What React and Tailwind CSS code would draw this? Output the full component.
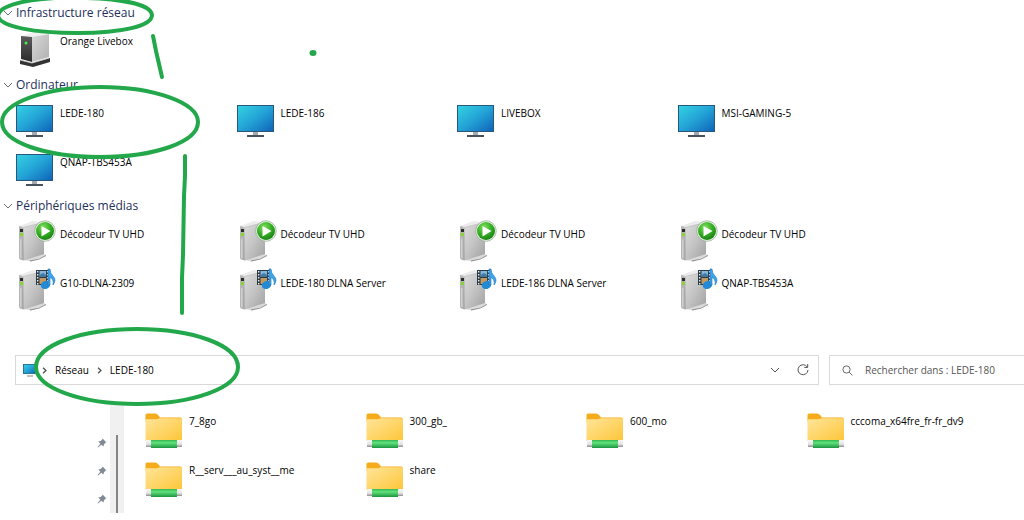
import { useState } from "react";

const sections = [
  {
    title: "Infrastructure réseau",
    items: [{ name: "Orange Livebox", icon: "router" }],
  },
  {
    title: "Ordinateur",
    items: [
      { name: "LEDE-180", icon: "monitor" },
      { name: "LEDE-186", icon: "monitor" },
      { name: "LIVEBOX", icon: "monitor" },
      { name: "MSI-GAMING-5", icon: "monitor" },
      { name: "QNAP-TBS453A", icon: "monitor" },
    ],
  },
  {
    title: "Périphériques médias",
    items: [
      { name: "Décodeur TV UHD", icon: "player" },
      { name: "Décodeur TV UHD", icon: "player" },
      { name: "Décodeur TV UHD", icon: "player" },
      { name: "Décodeur TV UHD", icon: "player" },
      { name: "G10-DLNA-2309", icon: "media" },
      { name: "LEDE-180 DLNA Server", icon: "media" },
      { name: "LEDE-186 DLNA Server", icon: "media" },
      { name: "QNAP-TBS453A", icon: "media" },
    ],
  },
];

const shares = [
  "7_8go",
  "300_gb_",
  "600_mo",
  "cccoma_x64fre_fr-fr_dv9",
  "R__serv___au_syst__me",
  "share",
];

// Gradients shared by all the icons
const Gradients = () => (
  <svg className="absolute size-0" aria-hidden="true">
    <defs>
      <linearGradient id="screen" x1="0" y1="0" x2="1" y2="1">
        <stop offset="0" stopColor="#35d3e2" />
        <stop offset="0.5" stopColor="#23a3d6" />
        <stop offset="1" stopColor="#0f62b8" />
      </linearGradient>
      <linearGradient id="side" x1="0" y1="0" x2="1" y2="1">
        <stop offset="0" stopColor="#d8d8d8" />
        <stop offset="1" stopColor="#b0b0b0" />
      </linearGradient>
      <linearGradient id="front" x1="0" y1="0" x2="0" y2="1">
        <stop offset="0" stopColor="#5b5b5b" />
        <stop offset="1" stopColor="#2c2c2c" />
      </linearGradient>
      <linearGradient id="metal" x1="0" y1="0" x2="1" y2="1">
        <stop offset="0" stopColor="#dedede" />
        <stop offset="0.5" stopColor="#c4c4c4" />
        <stop offset="1" stopColor="#a0a0a0" />
      </linearGradient>
      <radialGradient id="play" cx="0.4" cy="0.3" r="0.75">
        <stop offset="0" stopColor="#7fe05c" />
        <stop offset="0.55" stopColor="#35ad24" />
        <stop offset="1" stopColor="#157c12" />
      </radialGradient>
      <linearGradient id="folder" x1="0" y1="0" x2="1" y2="1">
        <stop offset="0" stopColor="#ffe59a" />
        <stop offset="1" stopColor="#fdc638" />
      </linearGradient>
      <linearGradient id="pipe" x1="0" y1="0" x2="0" y2="1">
        <stop offset="0" stopColor="#35b552" />
        <stop offset="0.35" stopColor="#5fe27b" />
        <stop offset="1" stopColor="#1d9440" />
      </linearGradient>
      <linearGradient id="cable" x1="0" y1="0" x2="0" y2="1">
        <stop offset="0" stopColor="#f7f7f7" />
        <stop offset="0.6" stopColor="#e4e4e4" />
        <stop offset="1" stopColor="#8e8e8e" />
      </linearGradient>
    </defs>
  </svg>
);

const RouterIcon = () => (
  <svg viewBox="0 0 40 48" className="h-12 w-10">
    <path d="M4 35 L16 38 L34 33 V37 L17 42 L4 39Z" fill="#333" />
    <path d="M5 11 L14 8 H33 L16 13Z" fill="#f0f0f0" />
    <path d="M5 11 L16 12 V37 L5 34Z" fill="url(#front)" />
    <path d="M16 12 L33 9 V32 L16 37Z" fill="url(#side)" />
    <path d="M4 35 L16 38 L33 33" fill="none" stroke="#d0d0d0" strokeWidth="0.8" />
    <circle cx="10" cy="18" r="1.5" fill="#3df04c" />
  </svg>
);

const MonitorIcon = () => (
  <svg viewBox="0 0 40 48" className="h-12 w-10">
    <path d="M16 34 H21 V38 H16Z" fill="#a4abb2" />
    <path d="M10 38 H27 V40 H10Z" fill="#47525d" />
    <rect x="0.5" y="8.5" width="36" height="26" fill="url(#screen)" stroke="#27577a" />
  </svg>
);

// Silver drive standing behind the media badges
const Drive = () => (
  <>
    <path d="M8 42 L27 35 L30 37.5 L15 43.5Z" fill="#dadada" />
    <path d="M14 43 Q24 42 30 37.5" fill="none" stroke="#777" strokeWidth="0.8" />
    <path d="M6.5 9 L23 4 Q28 3 28 8 V36 L8 42.5 L6.5 42Z" fill="url(#metal)" />
    <path d="M3 9 Q3 7.5 6.5 8.5 L7.5 42.5 L4 41.5 Q3 41 3 39.5Z" fill="#b5b5b5" />
    <path d="M3 8 L17 3 L27 4.5 L7 9.5Z" fill="#ececec" />
    <path d="M3 8 L7 9.5 L27 4.5" fill="none" stroke="#b0b0b0" strokeWidth="0.5" />
    <path d="M7 10 V42" stroke="#8d8d8d" strokeWidth="0.6" />
    <path d="M4 11 H7 V14 H4Z" fill="#2a2a2a" />
    <path d="M4 15 H7 V18 H4Z" fill="#87d52f" />
    <path d="M4.8 21 V40" stroke="#dcdcdc" />
  </>
);

const PlayerIcon = () => (
  <svg viewBox="0 0 40 48" className="h-12 w-10">
    <Drive />
    <circle cx="29" cy="13" r="10.3" fill="#e8f2e5" stroke="#7f9c7a" strokeWidth="0.6" />
    <circle cx="29" cy="13" r="9" fill="url(#play)" />
    <path d="M25.5 8 L34.5 13 L25.5 18.5Z" fill="#fff" />
  </svg>
);

const MediaIcon = () => (
  <svg viewBox="0 0 40 48" className="h-12 w-10">
    <Drive />
    <rect x="20" y="3" width="13" height="15" fill="#2d3943" />
    <path d="M23.5 4 H30 V10 H23.5Z" fill="#80b7df" />
    <path d="M23.5 11 H30 V17 H23.5Z" fill="#c39962" />
    <path d="M23.5 8 L27 6 L30 8 V10 H23.5Z" fill="#4479a2" />
    <path d="M21.7 4 V18 M31.6 4 V18" stroke="#e8eef3" strokeWidth="1.4" strokeDasharray="1.6 1.4" />
    <ellipse cx="29.5" cy="18" rx="4.8" ry="4" fill="#238bd5" transform="rotate(-20 29.5 18)" />
    <path
      d="M32 18 V2 H34 Q34 6 37 9 Q41 13 37 18 Q38 12 34 10.5 V18Z"
      fill="#3ca6ec"
      stroke="#1c70b5"
      strokeWidth="0.6"
    />
  </svg>
);

const FolderIcon = () => (
  <svg viewBox="0 0 40 48" className="h-12 w-10">
    <path d="M0.5 10 Q0.5 8.5 2 8.5 H10 Q12 8.5 13.5 10.5 L15 12.5 H35 Q36 12.5 37 13.5 V17 H0.5Z" fill="#f4ab1c" />
    <path d="M0.5 15 Q0.5 14.3 1.5 14.3 H11 Q13 14.3 14.5 13.3 H37 V36 H0.5Z" fill="url(#folder)" />
    <rect x="1" y="35" width="36" height="7" fill="url(#cable)" />
    <rect x="6" y="35" width="26" height="8" fill="url(#pipe)" />
  </svg>
);

const PinIcon = () => (
  <svg viewBox="0 0 10 10" className="size-[10px]">
    <path
      d="M5.6 0.6 L9.4 4.4 L8.4 4.8 L6.9 6.4 L6.5 8.6 L4.3 6.7 L1 9.4 L0.6 9 L3.3 5.7 L1.4 3.5 L3.6 3.1 L5.2 1.6Z"
      fill="#818b95"
    />
  </svg>
);

const Chevron = ({ className }) => (
  <svg viewBox="0 0 10 10" className={className} fill="none" stroke="currentColor">
    <path d="M1 3 L5 7 L9 3" />
  </svg>
);

const icons = {
  router: RouterIcon,
  monitor: MonitorIcon,
  player: PlayerIcon,
  media: MediaIcon,
  folder: FolderIcon,
};

const Tile = ({ name, icon }) => {
  const Icon = icons[icon];
  return (
    <li className="flex h-12 gap-1">
      <Icon />
      <span className="pt-2 text-[10px] leading-4 whitespace-nowrap text-black">{name}</span>
    </li>
  );
};

const TileGrid = ({ children }) => (
  <ul className="grid w-[882px] shrink-0 grid-cols-4 content-start gap-y-px">{children}</ul>
);

const Section = ({ title, items }) => {
  const [open, setOpen] = useState(true);

  return (
    <section>
      <h2>
        <button
          type="button"
          aria-expanded={open}
          onClick={() => setOpen(!open)}
          className="flex h-6 items-center gap-[3px] pl-[3px] text-[12px] text-[#1e2f5c]"
        >
          <Chevron className="size-[10px] text-[#6b6b6b]" />
          {title}
        </button>
      </h2>
      {open && (
        <div className="pl-4">
          <TileGrid>
            {items.map((item, index) => (
              <Tile key={index} {...item} />
            ))}
          </TileGrid>
        </div>
      )}
    </section>
  );
};

const AddressBar = () => (
  <div className="flex h-[30px] gap-[10px] pl-[15px] text-[10px]">
    <div className="flex flex-1 items-center border border-[#d9d9d9] pr-2 pl-[7px]">
      <svg viewBox="0 0 13 13" className="size-[13px]">
        <rect x="0.5" y="0.5" width="12" height="9" fill="url(#screen)" stroke="#27779c" />
        <path d="M4 12 H10" stroke="#7b8791" />
      </svg>
      <nav aria-label="Chemin" className="flex items-center gap-[7px] pl-[5px] text-black">
        <Chevron className="size-[7px] -rotate-90 stroke-2 text-[#555]" />
        <a href="#reseau">Réseau</a>
        <Chevron className="size-[7px] -rotate-90 stroke-2 text-[#555]" />
        <a href="#lede-180">LEDE-180</a>
      </nav>
      <div className="ml-auto flex items-center gap-4 text-[#555]">
        <button type="button" aria-label="Emplacements précédents">
          <Chevron className="size-[10px]" />
        </button>
        <button type="button" aria-label="Actualiser">
          <svg viewBox="0 0 14 14" className="size-[14px]" fill="none" stroke="currentColor">
            <path d="M11.2 4 A5 5 0 1 0 12 7" />
            <path d="M11.7 1 V4.4 H8.3" />
          </svg>
        </button>
      </div>
    </div>
    <label className="-mr-px flex w-[196px] items-center gap-3 border border-[#d9d9d9] pl-3">
      <svg viewBox="0 0 11 11" className="size-[11px] text-[#666]" fill="none" stroke="currentColor">
        <circle cx="4.5" cy="4.5" r="3.6" />
        <path d="M7.2 7.2 L10.4 10.4" />
      </svg>
      <input
        type="search"
        aria-label="Rechercher"
        placeholder="Rechercher dans : LEDE-180"
        className="min-w-0 flex-1 outline-none placeholder:text-[#555]"
      />
    </label>
  </div>
);

// Hand-drawn green marks lying over the window
const Marks = () => (
  <svg
    className="pointer-events-none absolute top-0 left-0 h-[420px] w-[330px]"
    viewBox="0 0 330 420"
    fill="none"
    stroke="#22a84b"
    strokeWidth="4"
    strokeLinecap="round"
    aria-hidden="true"
  >
    <path d="M55 -2 C20 0 -2 7 -2 16 C0 27 35 33 78 33 C122 33 152 26 152 15 C151 4 120 -1 86 -2" />
    <path d="M153 36 L156 51 L162 77" />
    <path d="M100 87 C155 87 198 103 198 122 C198 142 155 157 100 157 C45 157 2 142 2 122 C2 103 45 87 100 87Z" />
    <path d="M185 156 V176 L184 196 L183 255 L182 278 V313" />
    <path d="M137 329 C193 329 238 345 238 367 C238 388 193 404 137 404 C81 404 36 388 36 367 C36 345 81 329 137 329Z" />
    <ellipse cx="313" cy="53" rx="3.5" ry="3" fill="#22a84b" stroke="none" />
  </svg>
);

export default function App() {
  return (
    <main className="relative overflow-hidden bg-white pt-px font-['Open_Sans','Noto_Sans',sans-serif]">
      <Gradients />
      {sections.map(section => (
        <Section key={section.title} {...section} />
      ))}

      <div className="pt-10">
        <AddressBar />
      </div>

      <div className="flex gap-[21px] pt-5">
        <aside className="flex h-[108px] w-[124px] shrink-0 justify-end">
          <div className="flex flex-col gap-[18px] pt-[33px] pr-[3px]">
            <PinIcon />
            <PinIcon />
            <PinIcon />
          </div>
          <div className="flex w-[14px] justify-center bg-[#f0f0f0] pt-[30px]">
            <div className="w-[2px] bg-[#858585]"></div>
          </div>
        </aside>
        <TileGrid>
          {shares.map(name => (
            <Tile key={name} name={name} icon="folder" />
          ))}
        </TileGrid>
      </div>

      <Marks />
    </main>
  );
}
